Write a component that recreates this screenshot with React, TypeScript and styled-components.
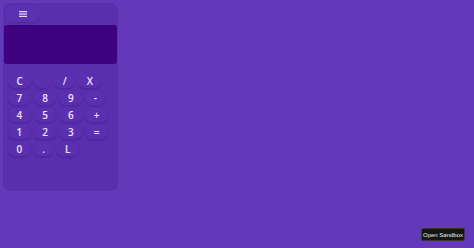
import styled, { createGlobalStyle } from "styled-components";

const GlobalStyle = createGlobalStyle`
    body {
        margin: 0;
        background: #6339ba;
        font-family: "Open Sans", "Liberation Sans", sans-serif;
    }
`;

const rows: string[][] = [
    ["C", "", "/", "X"],
    ["7", "8", "9", "-"],
    ["4", "5", "6", "+"],
    ["1", "2", "3", "="],
    ["0", ".", "L"],
];

const App = () => {
    return (
        <>
            <GlobalStyle />
            <Calculator>
                <TopBar>
                    <MenuButton aria-label="menu">
                        <svg width="8" height="6" viewBox="0 0 8 6">
                            <rect x="0" y="0" width="8" height="1.2" fill="#e6dcff" />
                            <rect x="0" y="2.4" width="8" height="1.2" fill="#e6dcff" />
                            <rect x="0" y="4.8" width="8" height="1.2" fill="#e6dcff" />
                        </svg>
                    </MenuButton>
                </TopBar>
                <Display />
                <Keypad>
                    {rows.map((row, i) => (
                        <KeyRow key={i}>
                            {row.map((k, j) => (
                                <Key key={j}>{k}</Key>
                            ))}
                        </KeyRow>
                    ))}
                </Keypad>
            </Calculator>
            <SandboxButton>Open Sandbox</SandboxButton>
        </>
    );
};

export default App;

const Calculator = styled.div`
    margin: 3px;
    width: 115px;
    height: 188px;
    box-sizing: border-box;
    background: #5a2fae;
    border-radius: 7px;
    display: flex;
    flex-direction: column;
    overflow: hidden;
`;

const TopBar = styled.div`
    display: flex;
    padding: 2px 2px 3px 2px;
`;

const MenuButton = styled.button`
    width: 35px;
    height: 17px;
    border: none;
    border-radius: 8px;
    background: #5c31b1;
    box-shadow: 0 1px 2px rgba(30, 0, 80, 0.18);
    display: flex;
    align-items: center;
    justify-content: center;
    padding: 0;
`;

const Display = styled.div`
    margin: 0 1px 0 1px;
    height: 39px;
    background: #3e0180;
    border-radius: 3px;
`;

const Keypad = styled.div`
    display: flex;
    flex-direction: column;
    gap: 3px;
    padding: 10px 5px 0 5px;
`;

const KeyRow = styled.div`
    display: flex;
    gap: 3px;
`;

const Key = styled.button`
    height: 14px;
    min-width: 17px;
    padding: 0 8.5px;
    border: none;
    border-radius: 7px;
    background: #5b30b0;
    box-shadow: 0 1.5px 2px rgba(30, 0, 80, 0.22);
    color: #ece3ff;
    font-family: "Open Sans", "Liberation Sans", sans-serif;
    font-weight: 600;
    font-size: 10px;
    line-height: 14px;
    display: flex;
    align-items: center;
    justify-content: center;
`;

const SandboxButton = styled.div`
    position: fixed;
    right: 9px;
    bottom: 7px;
    width: 44px;
    height: 13px;
    box-sizing: border-box;
    background: #151515;
    border: 1px solid #3a3a3a;
    border-radius: 2px;
    color: #f0f0f0;
    font-family: "Liberation Sans", sans-serif;
    font-size: 6px;
    display: flex;
    align-items: center;
    justify-content: center;
    white-space: nowrap;
`;
